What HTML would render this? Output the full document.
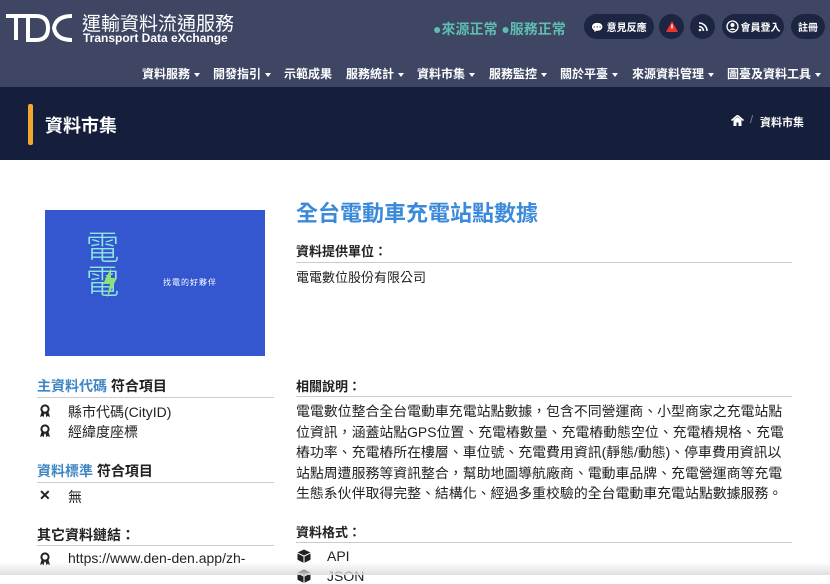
<!DOCTYPE html>
<html><head><meta charset="utf-8"><style>
*{margin:0;padding:0;box-sizing:border-box}
body{width:830px;height:575px;overflow:hidden;background:#fff;font-family:"Liberation Sans","Noto Sans CJK TC",sans-serif;color:#222;position:relative}
.hdr{position:absolute;left:0;top:0;width:830px;height:87px;background:#3e4664}
.band{position:absolute;left:0;top:87px;width:830px;height:73px;background:#151e3a}
.abs{position:absolute;white-space:nowrap}
.pill{position:absolute;top:14px;height:25px;border-radius:13px;background:#1c2541;color:#fff;font-size:10px;font-weight:bold;display:flex;align-items:center;justify-content:center}
.nav{font-size:12px;font-weight:bold;color:#fff;top:65px}
.car{display:inline-block;border-left:3px solid transparent;border-right:3px solid transparent;border-top:4px solid #fff;vertical-align:middle;margin-left:4px}
.sec{font-size:14px;font-weight:bold}
.line{position:absolute;height:1px;background:#ccc}
.it{font-size:14px}
.ic{position:absolute}
</style></head><body>
<div class="hdr"></div>
<div class="band"></div>
<svg class="abs" style="left:4px;top:10px" width="72" height="34" viewBox="0 0 72 34">
<g fill="none" stroke="#fff" stroke-width="4">
<path d="M2 6 H22 M12 6 V30"/>
<path d="M24 6 H32 Q44 6 44 18 Q44 30 32 30 H24 Z"/>
<path d="M68 6 Q52 6 50 18 Q52 30 68 30"/>
</g></svg>
<div class="abs" style="left:82px;top:9px;color:#fff;font-size:19px">運輸資料流通服務</div>
<div class="abs" style="left:83px;top:31px;color:#fff;font-size:12px;font-weight:bold">Transport Data eXchange</div>
<div class="abs" style="left:433px;top:19px;color:#5fbcb0;font-size:14px;font-weight:bold">●來源正常 ●服務正常</div>
<div class="pill" style="left:584px;width:70px">💬&nbsp;意見反應</div>
<div class="pill" style="left:659px;width:25px"><svg width="12" height="11"><path d="M6 0 L12 11 H0Z" fill="#e33"/><rect x="5.3" y="3.5" width="1.4" height="4" fill="#fff"/></svg></div>
<div class="pill" style="left:690px;width:25px"><svg width="10" height="10" viewBox="0 0 10 10"><circle cx="2" cy="8" r="1.3" fill="#fff"/><path d="M1 4.5 A4.5 4.5 0 0 1 5.5 9 M1 1 A8 8 0 0 1 9 9" stroke="#fff" stroke-width="1.6" fill="none"/></svg></div>
<div class="pill" style="left:722px;width:62px"><svg width="13" height="13" viewBox="0 0 13 13" style="margin-right:2px"><circle cx="6.5" cy="6.5" r="5.5" stroke="#fff" stroke-width="1.3" fill="none"/><circle cx="6.5" cy="5" r="2" fill="#fff"/><path d="M3.3 10 Q6.5 6.5 9.7 10" fill="#fff"/></svg>會員登入</div>
<div class="pill" style="left:791px;width:34px">註冊</div>
<div class="abs nav" style="left:142px">資料服務<span class="car"></span></div>
<div class="abs nav" style="left:213px">開發指引<span class="car"></span></div>
<div class="abs nav" style="left:284px">示範成果</div>
<div class="abs nav" style="left:346px">服務統計<span class="car"></span></div>
<div class="abs nav" style="left:417px">資料市集<span class="car"></span></div>
<div class="abs nav" style="left:489px">服務監控<span class="car"></span></div>
<div class="abs nav" style="left:560px">關於平臺<span class="car"></span></div>
<div class="abs nav" style="left:632px">來源資料管理<span class="car"></span></div>
<div class="abs nav" style="left:727px">圖臺及資料工具<span class="car"></span></div>
<div class="abs" style="left:28px;top:104px;width:5px;height:41px;background:#f0a830;border-radius:2px"></div>
<div class="abs" style="left:45px;top:112px;color:#fff;font-size:18px;font-weight:bold">資料市集</div>
<svg class="abs" style="left:731px;top:115px" width="13" height="11" viewBox="0 0 13 11"><path d="M0.5 5.5 L6.5 0.5 L12.5 5.5" stroke="#fff" stroke-width="1.6" fill="none"/><path d="M2.5 5 V11 H5.5 V7.5 H7.5 V11 H10.5 V5 L6.5 2Z" fill="#fff"/></svg>
<div class="abs" style="left:750px;top:114px;color:#888;font-size:11px">/</div>
<div class="abs" style="left:760px;top:114px;color:#fff;font-size:11px;font-weight:bold">資料市集</div>
<div class="abs" style="left:45px;top:210px;width:220px;height:146px;background:#3457d0"></div>
<div class="abs" style="left:77px;top:230px;color:#8ee8e0;font-size:34px;line-height:44px;writing-mode:vertical-rl;font-weight:300">電電</div>
<svg class="abs" style="left:101px;top:268px" width="18" height="30"><path d="M10 0 L2 16 H9 L6 30 L16 10 H10Z" fill="#8fe07a"/></svg>
<div class="abs" style="left:163px;top:277px;color:#fff;font-size:8px;letter-spacing:1px">找電的好夥伴</div>
<svg width="0" height="0" style="position:absolute"><defs><symbol id="aw" viewBox="0 0 12 14"><circle cx="6" cy="5" r="3.6" stroke="#222" stroke-width="2" fill="none"/><path d="M2.5 8 L1 13 L3.5 12 L4.5 13.5 L5.5 9.5 M9.5 8 L11 13 L8.5 12 L7.5 13.5 L6.5 9.5" fill="#222"/></symbol>
<symbol id="cb" viewBox="0 0 14 14"><path d="M7 0.5 L13.5 3.5 L7 6.5 L0.5 3.5Z M0.5 4.5 L6.5 7.5 V13.8 L0.5 10.8Z M13.5 4.5 L7.5 7.5 V13.8 L13.5 10.8Z" fill="#222"/></symbol></defs></svg>
<div class="abs sec" style="left:37px;top:376px"><span style="color:#3f86c4">主資料代碼</span> 符合項目</div>
<div class="line" style="left:37px;top:397px;width:237px"></div>
<svg class="ic" style="left:39px;top:404px" width="12" height="14"><use href="#aw"/></svg>
<div class="abs it" style="left:68px;top:402px">縣市代碼(CityID)</div>
<svg class="ic" style="left:39px;top:424px" width="12" height="14"><use href="#aw"/></svg>
<div class="abs it" style="left:68px;top:422px">經緯度座標</div>
<div class="abs sec" style="left:37px;top:461px"><span style="color:#3f86c4">資料標準</span> 符合項目</div>
<div class="line" style="left:37px;top:482px;width:237px"></div>
<div class="abs it" style="left:39px;top:487px"><b>✕</b></div>
<div class="abs it" style="left:68px;top:487px">無</div>
<div class="abs sec" style="left:37px;top:525px">其它資料鏈結：</div>
<div class="line" style="left:37px;top:545px;width:237px"></div>
<svg class="ic" style="left:39px;top:552px" width="12" height="14"><use href="#aw"/></svg>
<div class="abs it" style="left:68px;top:550px">https://www.den-den.app/zh-</div>
<div class="abs" style="left:296px;top:196px;color:#3b8ad9;font-size:22px;font-weight:bold">全台電動車充電站點數據</div>
<div class="abs sec" style="left:296px;top:241px;font-size:13px">資料提供單位：</div>
<div class="line" style="left:296px;top:262px;width:496px"></div>
<div class="abs" style="left:296px;top:267px;font-size:13px">電電數位股份有限公司</div>
<div class="abs sec" style="left:296px;top:376px;font-size:13px">相關說明：</div>
<div class="line" style="left:296px;top:396px;width:496px"></div>
<div class="abs" style="left:296px;top:401px;width:496px;white-space:normal;font-size:13.9px;line-height:20.5px">電電數位整合全台電動車充電站點數據，包含不同營運商、小型商家之充電站點位資訊，涵蓋站點GPS位置、充電樁數量、充電樁動態空位、充電樁規格、充電樁功率、充電樁所在樓層、車位號、充電費用資訊(靜態/動態)、停車費用資訊以站點周遭服務等資訊整合，幫助地圖導航廠商、電動車品牌、充電營運商等充電生態系伙伴取得完整、結構化、經過多重校驗的全台電動車充電站點數據服務。</div>
<div class="abs sec" style="left:296px;top:522px;font-size:13px">資料格式：</div>
<div class="line" style="left:296px;top:542px;width:496px"></div>
<svg class="ic" style="left:297px;top:549px" width="14" height="14"><use href="#cb"/></svg>
<div class="abs it" style="left:327px;top:548px">API</div>
<svg class="ic" style="left:297px;top:569px" width="14" height="14"><use href="#cb"/></svg>
<div class="abs it" style="left:327px;top:568px">JSON</div>
<div class="abs" style="left:0;top:562px;width:830px;height:13px;background:linear-gradient(rgba(230,230,230,0),rgba(220,220,220,.9))"></div>
</body></html>
